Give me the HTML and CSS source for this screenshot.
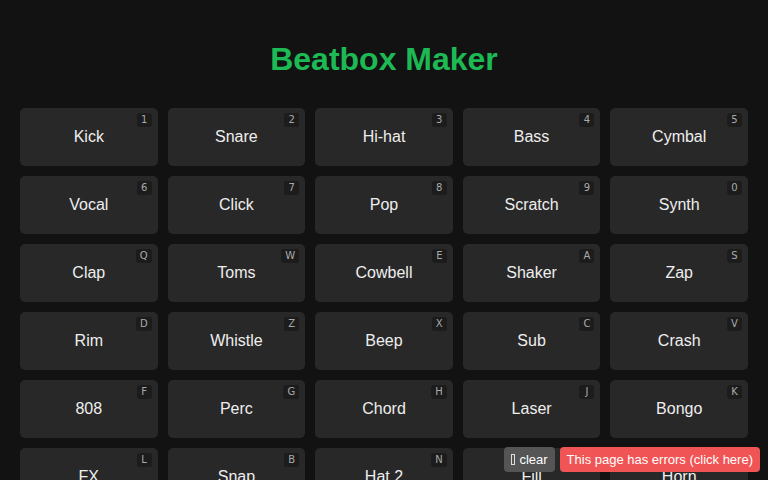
FILE: index.html
```html
<!DOCTYPE html>
<html lang="en">
<head>
  <meta charset="UTF-8" />
  <meta name="viewport" content="width=device-width, initial-scale=1.0"/>
  <title>Beatbox Maker</title>
  <link rel="stylesheet" href="styles.css">
</head>
<body>
  <h1>Beatbox Maker</h1>

  <div class="pads">
    <button class="pad">Kick<span class="key">1</span></button>
    <button class="pad">Snare<span class="key">2</span></button>
    <button class="pad">Hi-hat<span class="key">3</span></button>
    <button class="pad">Bass<span class="key">4</span></button>
    <button class="pad">Cymbal<span class="key">5</span></button>

    <button class="pad">Vocal<span class="key">6</span></button>
    <button class="pad">Click<span class="key">7</span></button>
    <button class="pad">Pop<span class="key">8</span></button>
    <button class="pad">Scratch<span class="key">9</span></button>
    <button class="pad">Synth<span class="key">0</span></button>

    <button class="pad">Clap<span class="key">Q</span></button>
    <button class="pad">Toms<span class="key">W</span></button>
    <button class="pad">Cowbell<span class="key">E</span></button>
    <button class="pad">Shaker<span class="key">A</span></button>
    <button class="pad">Zap<span class="key">S</span></button>

    <button class="pad">Rim<span class="key">D</span></button>
    <button class="pad">Whistle<span class="key">Z</span></button>
    <button class="pad">Beep<span class="key">X</span></button>
    <button class="pad">Sub<span class="key">C</span></button>
    <button class="pad">Crash<span class="key">V</span></button>

    <button class="pad">808<span class="key">F</span></button>
    <button class="pad">Perc<span class="key">G</span></button>
    <button class="pad">Chord<span class="key">H</span></button>
    <button class="pad">Laser<span class="key">J</span></button>
    <button class="pad">Bongo<span class="key">K</span></button>

    <button class="pad">FX<span class="key">L</span></button>
    <button class="pad">Snap<span class="key">B</span></button>
    <button class="pad">Hat 2<span class="key">N</span></button>
    <button class="pad">Fill<span class="key">M</span></button>
    <button class="pad">Horn<span class="key">P</span></button>
  </div>

  <div class="errors">
    <button class="clear"><span class="tofu"></span>clear</button>
    <button class="error-msg">This page has errors (click here)</button>
  </div>
</body>
</html>
```

FILE: styles.css
```css
body {
  font-family: "Liberation Sans", Arial, sans-serif;
  margin: 0;
  padding: 20px;
  background: #121212;
  color: #eee;
  overflow: hidden;
}

h1 {
  margin: 21px 0 30px;
  font-size: 32px;
  line-height: 37px;
  text-align: center;
  color: #1db954;
}

.pads {
  display: grid;
  grid-template-columns: repeat(5, 1fr);
  gap: 10px;
}

.pad {
  position: relative;
  height: 58px;
  background: #282828;
  border: none;
  border-radius: 5px;
  color: #eee;
  font-family: "Liberation Sans", Arial, sans-serif;
  font-size: 16px;
  cursor: pointer;
}

.pad:hover {
  background: #333;
}

.key {
  position: absolute;
  top: 5px;
  right: 6px;
  min-width: 7px;
  padding: 1px 4px;
  background: #1c1c1c;
  border-radius: 3px;
  color: #aaa;
  font-family: "DejaVu Sans", sans-serif;
  font-size: 10px;
  line-height: 12px;
  text-align: center;
}

.errors {
  position: fixed;
  right: 8px;
  bottom: 8px;
  display: flex;
  gap: 5px;
}

.errors button {
  height: 25px;
  padding: 0 7px;
  border: none;
  border-radius: 4px;
  color: #fff;
  font-family: "Liberation Sans", Arial, sans-serif;
  font-size: 13px;
}

.clear {
  background: #555;
  display: flex;
  align-items: center;
}

.tofu {
  display: inline-block;
  width: 2px;
  height: 9px;
  border: 1px solid #ddd;
  margin-right: 4px;
}

.error-msg {
  background: #f05454;
}
```
